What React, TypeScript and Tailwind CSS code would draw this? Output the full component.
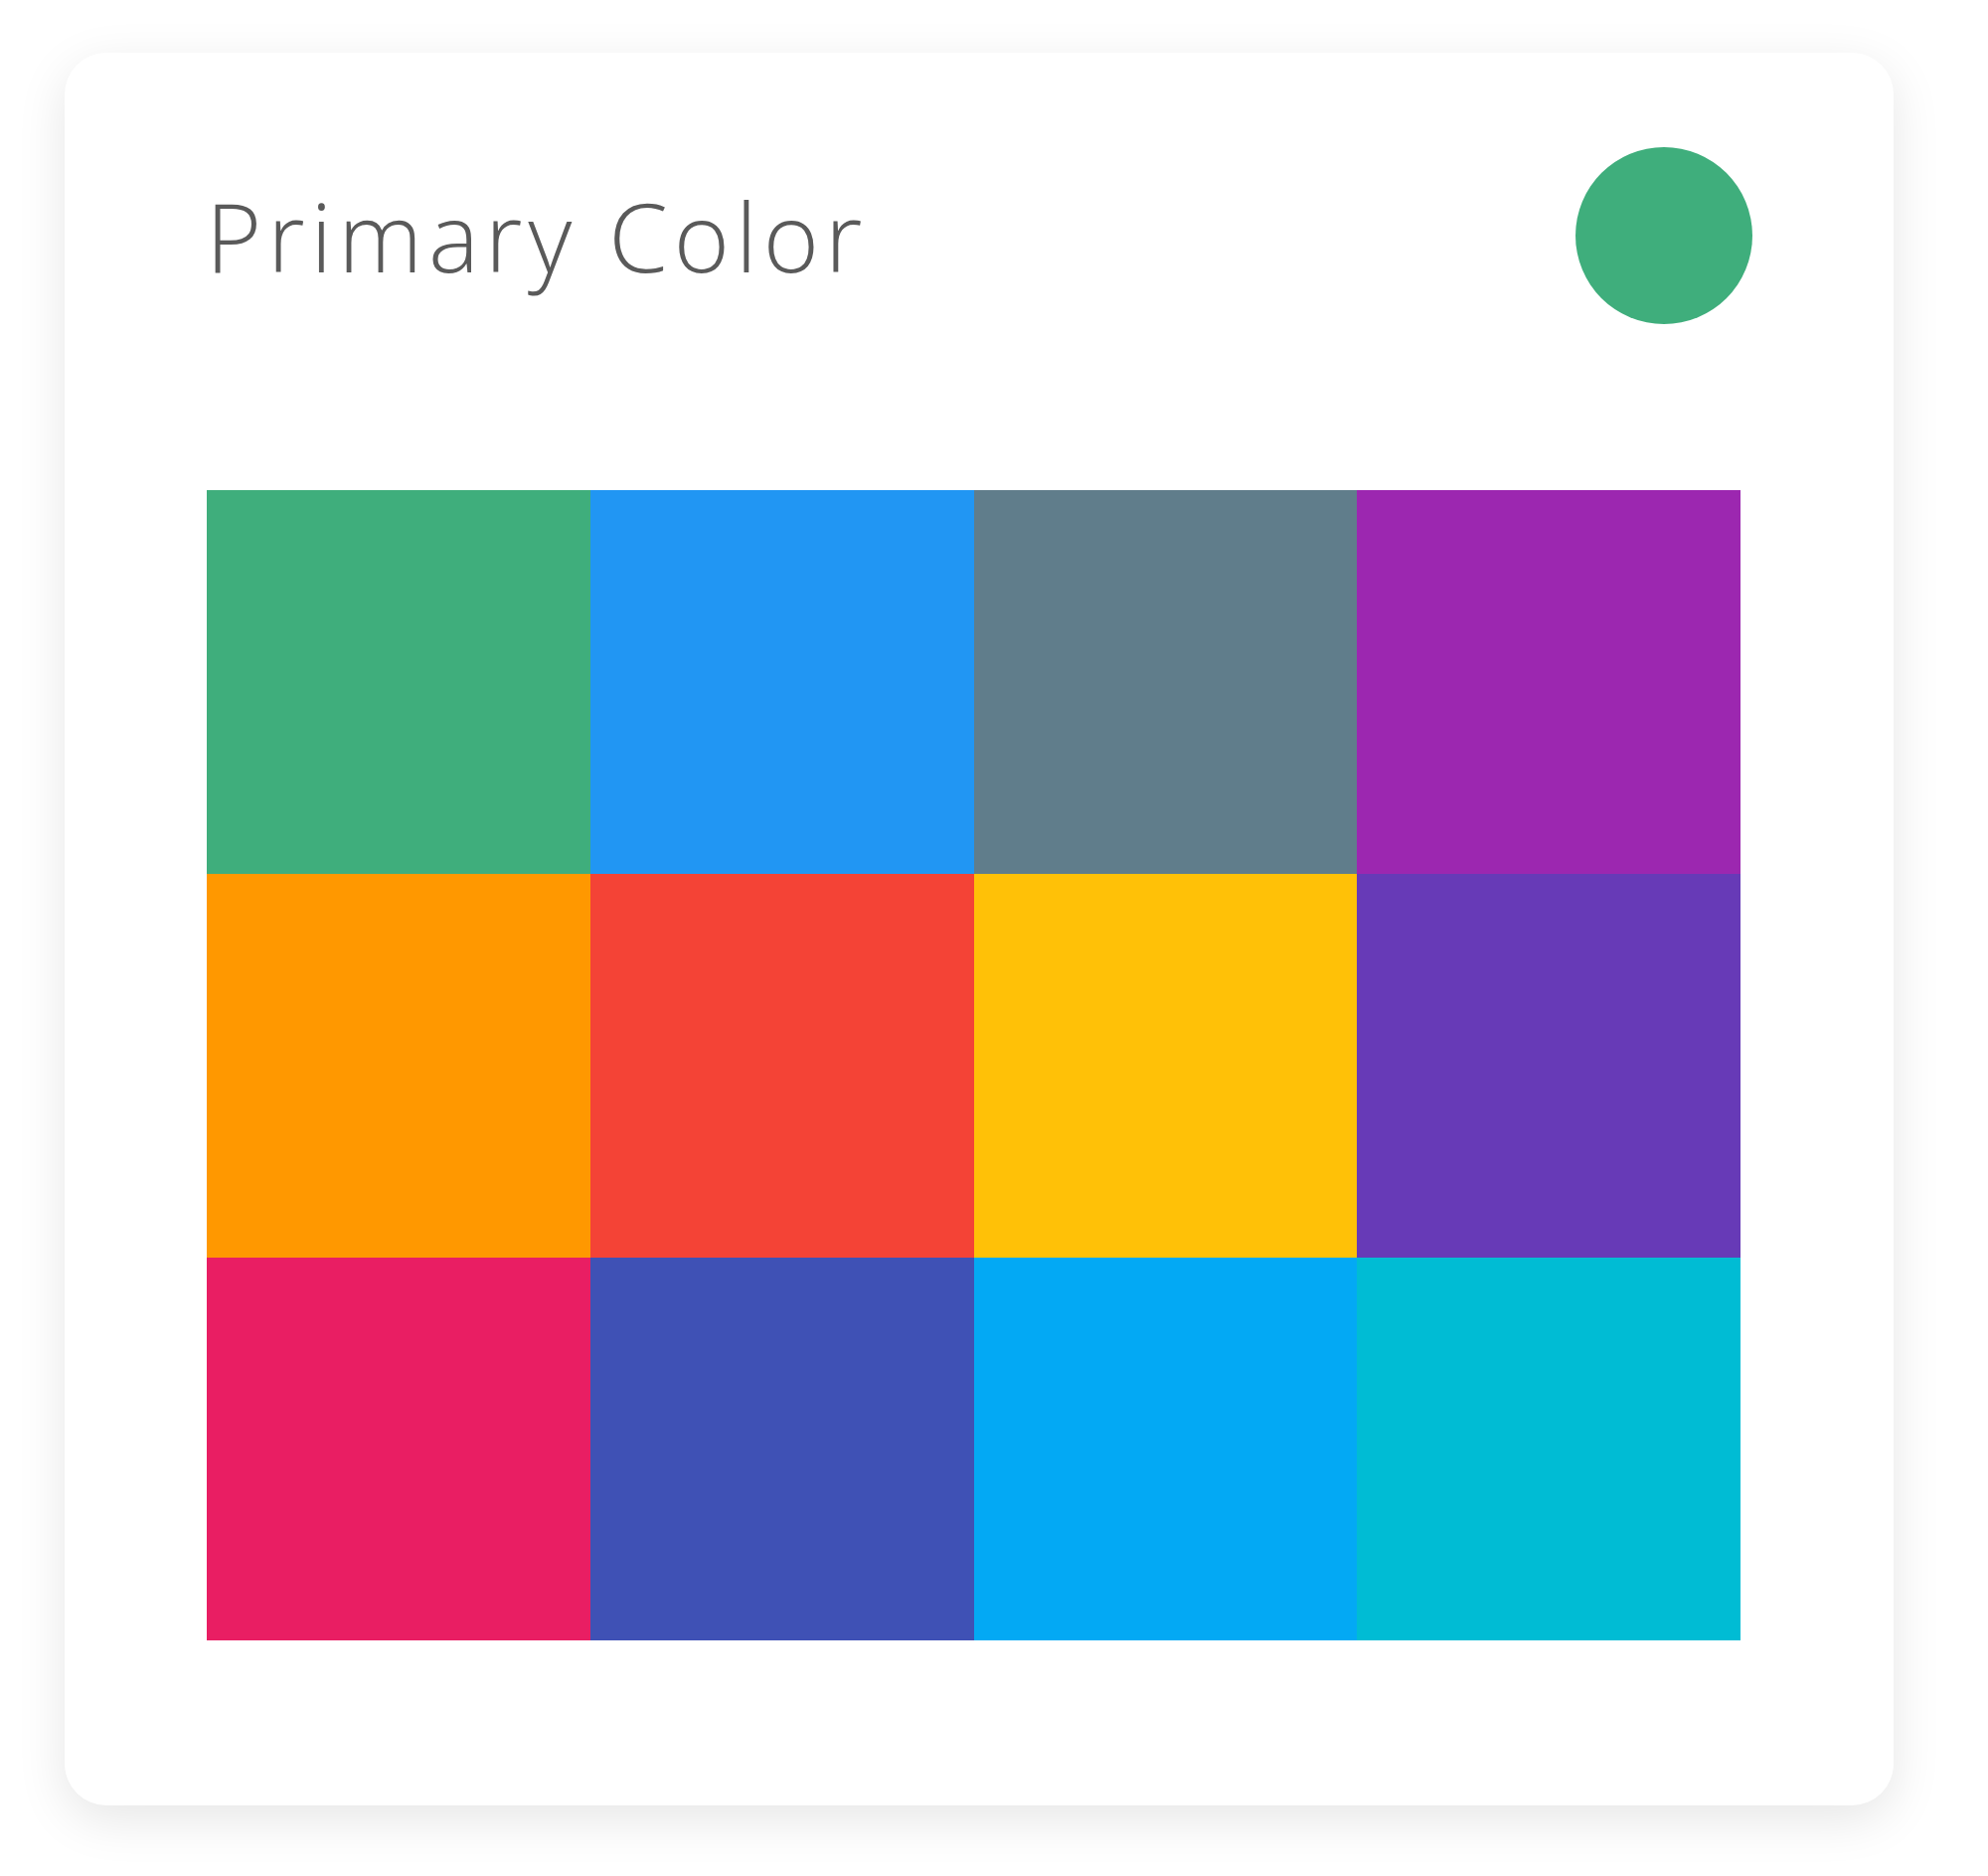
const colors = [
  "#3fae7c", "#2196f3", "#607d8b", "#9c27b0",
  "#ff9800", "#f44336", "#ffc107", "#673ab7",
  "#e91e63", "#3f51b5", "#03a9f4", "#00bcd4",
];

export default function App() {
  return (
    <div className="w-[2000px] h-[1887px] bg-white pt-[53px] pl-[65px]">
      <div className="w-[1840px] h-[1763px] bg-white rounded-[42px] shadow-[0_14px_50px_rgba(0,0,0,0.1)] pt-[95px] pl-[143px] pr-[142px] flex flex-col">
        <div className="flex items-center justify-between h-[178px]">
          <span
            className="text-[96px] font-light text-[#5a5a5a] leading-none tracking-[6px] -ml-[1px]"
            style={{ fontFamily: "'Open Sans', Lato, sans-serif" }}
          >
            Primary Color
          </span>
          <div className="w-[178px] h-[178px] rounded-full bg-[#3fae7c]" />
        </div>
        <div className="mt-[167px] w-[1543px] grid grid-cols-4">
          {colors.map((c) => (
            <div key={c} className="h-[385.75px]" style={{ backgroundColor: c }} />
          ))}
        </div>
      </div>
    </div>
  );
}
